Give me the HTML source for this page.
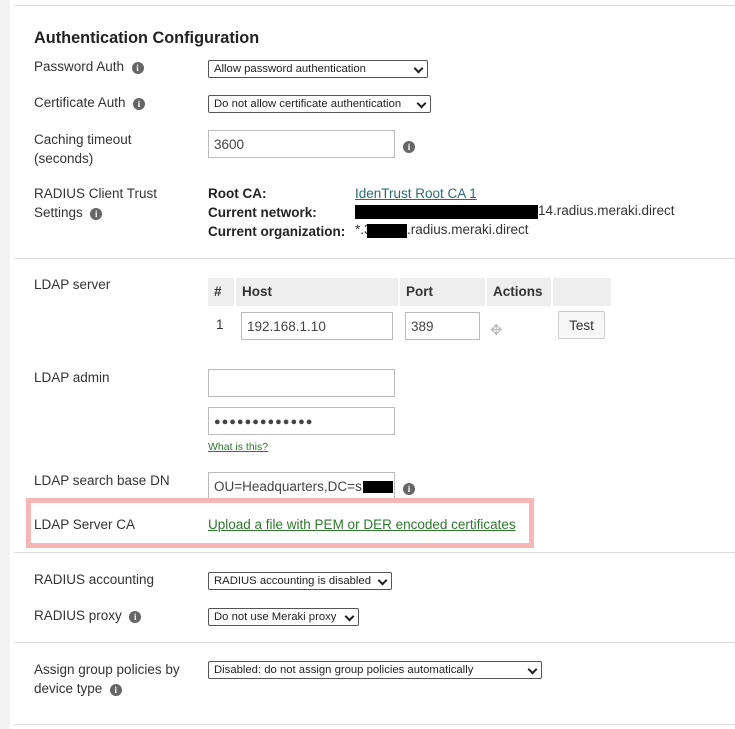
<!DOCTYPE html>
<html><head><meta charset="utf-8"><style>
body{margin:0;width:735px;height:729px;background:#fff;font-family:"Liberation Sans",Arial,sans-serif;font-size:13.5px;color:#333;position:relative;overflow:hidden}
.a{position:absolute;white-space:nowrap}
.strip{position:absolute;left:0;top:0;width:10px;height:729px;background:#f3f3f3}
.hr{position:absolute;left:14px;right:0;height:1px;background:#ddd}
.sel{position:absolute;height:16px;border:1px solid #555;border-radius:2px;font-size:11.3px;line-height:16px;padding-left:5px;box-sizing:content-box;color:#222}
.sel:after{content:"";position:absolute;right:5px;top:4px;width:5px;height:5px;border-right:2px solid #222;border-bottom:2px solid #222;transform:rotate(45deg)}
.in{position:absolute;border:1px solid #bbb;height:26px;line-height:26px;padding-left:5px;font-size:13.5px;color:#444;box-sizing:border-box}
.i{display:inline-block;width:12px;height:12px;border-radius:50%;background:#666;color:#fff;font-size:9px;line-height:12px;text-align:center;font-weight:bold;font-family:"Liberation Serif",serif;vertical-align:0px}
.th{position:absolute;top:278px;height:28px;background:#eee;font-weight:bold;line-height:28px;padding-left:6px;box-sizing:border-box}
.lnk{color:#2d7a2d;text-decoration:underline}
.blk{position:absolute;background:#000}
</style></head><body>
<div class="strip"></div>
<div class="hr" style="top:5px"></div>
<div class="a" style="left:34px;top:29px;font-size:16.3px;font-weight:bold;color:#222">Authentication Configuration</div>
<div class="a" style="left:34px;top:59px">Password Auth &nbsp;<span class="i">i</span></div>
<div class="sel" style="left:208px;top:60px;width:213px">Allow password authentication</div>
<div class="a" style="left:34px;top:95px">Certificate Auth &nbsp;<span class="i">i</span></div>
<div class="sel" style="left:208px;top:95px;width:216px">Do not allow certificate authentication</div>
<div class="a" style="left:34px;top:130px;line-height:19px">Caching timeout<br>(seconds)</div>
<div class="in" style="left:208px;top:130px;width:187px;height:28px;line-height:28px">3600</div>
<div class="a" style="left:403px;top:138px"><span class="i">i</span></div>
<div class="a" style="left:34px;top:184px;line-height:19px">RADIUS Client Trust<br>Settings &nbsp;<span class="i">i</span></div>
<div class="a" style="left:208px;top:184px;line-height:19px;font-weight:bold;color:#222">Root CA:<br>Current network:<br>Current organization:</div>
<div class="a" style="left:355px;top:184px;line-height:19px"><span class="lnk" style="color:#2a6e6e">IdenTrust Root CA 1</span></div>
<div class="blk" style="left:355px;top:205px;width:183px;height:14px"></div>
<div class="a" style="left:538px;top:203px">14.radius.meraki.direct</div>
<div class="a" style="left:355px;top:222px">*.3</div>
<div class="blk" style="left:367px;top:224px;width:40px;height:14px"></div>
<div class="a" style="left:407px;top:222px">.radius.meraki.direct</div>
<div class="hr" style="top:258px"></div>
<div class="a" style="left:34px;top:277px">LDAP server</div>
<div class="th" style="left:208px;width:26px">#</div>
<div class="th" style="left:236px;width:162px">Host</div>
<div class="th" style="left:400px;width:85px">Port</div>
<div class="th" style="left:487px;width:64px">Actions</div>
<div class="th" style="left:553px;width:58px"></div>
<div class="a" style="left:216px;top:317px">1</div>
<div class="in" style="left:241px;top:312px;width:152px;height:28px;line-height:28px">192.168.1.10</div>
<div class="in" style="left:405px;top:312px;width:75px;height:28px;line-height:28px">389</div>
<div class="a" style="left:490px;top:321px;color:#bbb;font-size:15px">✥</div>
<div style="position:absolute;left:558px;top:311px;width:47px;height:28px;border:1px solid #ccc;border-radius:2px;background:#f7f7f7;text-align:center;line-height:28px;box-sizing:border-box">Test</div>
<div class="a" style="left:34px;top:370px">LDAP admin</div>
<div class="in" style="left:208px;top:369px;width:187px;height:28px"></div>
<div class="in" style="left:208px;top:407px;width:187px;height:28px;line-height:28px;letter-spacing:1px;font-size:11px">●●●●●●●●●●●●●</div>
<div class="a lnk" style="left:208px;top:441px;font-size:10.5px">What is this?</div>
<div class="a" style="left:34px;top:473px">LDAP search base DN</div>
<div class="in" style="left:208px;top:472px;width:187px;height:28px;line-height:28px;overflow:hidden">OU=Headquarters,DC=s</div>
<div class="blk" style="left:363px;top:481px;width:30px;height:12px"></div>
<div class="a" style="left:403px;top:480px"><span class="i">i</span></div>
<div style="position:absolute;left:26px;top:498px;width:508px;height:50px;border:5px solid #f8b6b6;box-sizing:border-box"></div>
<div class="a" style="left:34px;top:517px">LDAP Server CA</div>
<div class="a lnk" style="left:208px;top:517px">Upload a file with PEM or DER encoded certificates</div>
<div class="hr" style="top:552px"></div>
<div class="a" style="left:34px;top:572px">RADIUS accounting</div>
<div class="sel" style="left:208px;top:572px;width:177px">RADIUS accounting is disabled</div>
<div class="a" style="left:34px;top:608px">RADIUS proxy &nbsp;<span class="i">i</span></div>
<div class="sel" style="left:208px;top:608px;width:144px">Do not use Meraki proxy</div>
<div class="hr" style="top:642px"></div>
<div class="a" style="left:34px;top:660px;line-height:19px">Assign group policies by<br>device type &nbsp;<span class="i">i</span></div>
<div class="sel" style="left:208px;top:661px;width:327px">Disabled: do not assign group policies automatically</div>
<div class="hr" style="top:724px"></div>
</body></html>
